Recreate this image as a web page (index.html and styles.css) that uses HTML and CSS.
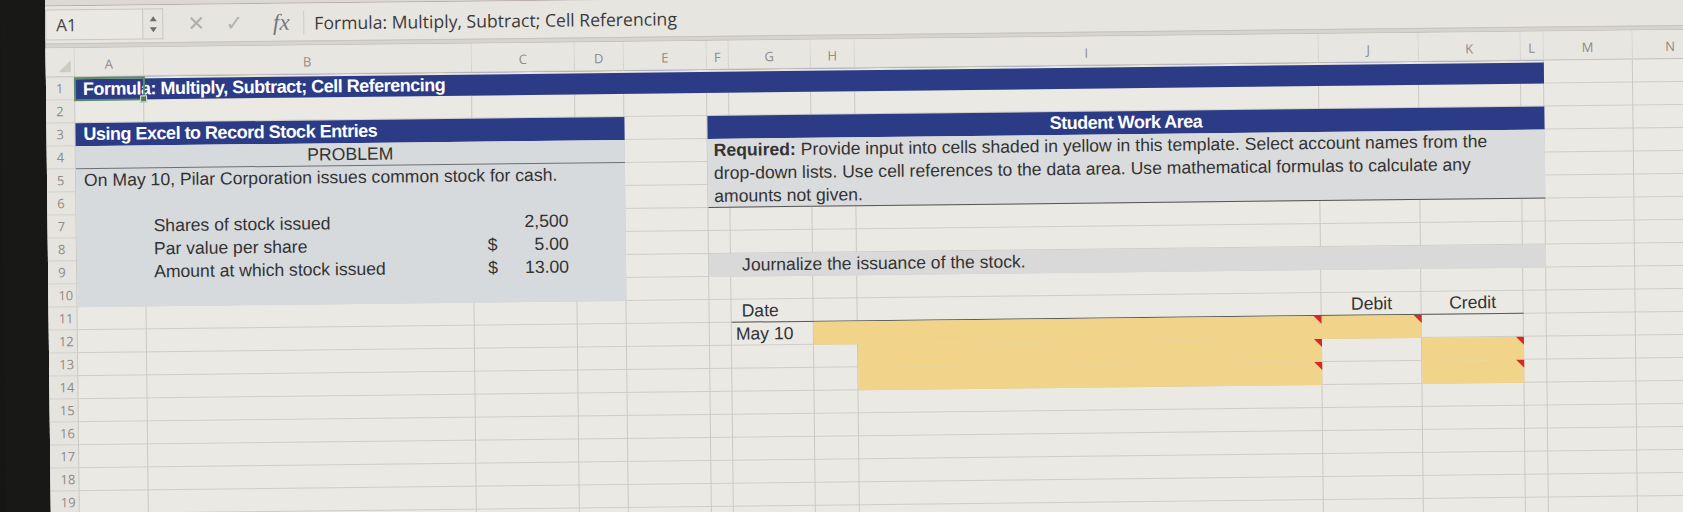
FILE: index.html
```html
<!DOCTYPE html>
<html lang="en">
<head>
    <meta charset="UTF-8">
    <meta name="viewport" content="width=device-width, initial-scale=1.0">
    <title>Formula: Multiply, Subtract; Cell Referencing</title>
    <link rel="stylesheet" href="styles.css">
</head>
<body>

    <div class="screen">
        <div class="bezel"></div>

        <div class="app">
            <div class="topline"></div>

            <div class="formula-bar">
                <div class="name-box">A1</div>
                <div class="spinner">
                    <svg width="8" height="18" viewBox="0 0 8 18">
                        <path d="M4 1 L7.5 6 L0.5 6 Z" fill="#6d6d6d"/>
                        <path d="M0.5 12 L7.5 12 L4 17 Z" fill="#6d6d6d"/>
                    </svg>
                </div>
                <span class="fx-btn cancel">✕</span>
                <span class="fx-btn enter">✓</span>
                <span class="fx">fx</span>
                <span class="bar-sep"></span>
                <div class="formula-text">Formula: Multiply, Subtract; Cell Referencing</div>
            </div>

            <div class="divider"></div>

            <div class="sheet">
                <!-- column lines, with their header letters -->
                <div class="col rownums">
                    <div class="col-head corner"><span class="corner-tri"></span></div>
                    <div class="rn">1</div><div class="rn">2</div><div class="rn">3</div><div class="rn">4</div>
                    <div class="rn">5</div><div class="rn">6</div><div class="rn">7</div><div class="rn">8</div>
                    <div class="rn">9</div><div class="rn">10</div><div class="rn">11</div><div class="rn">12</div>
                    <div class="rn">13</div><div class="rn">14</div><div class="rn">15</div><div class="rn">16</div>
                    <div class="rn">17</div><div class="rn">18</div><div class="rn">19</div><div class="rn">20</div>
                    <div class="rn">21</div><div class="rn">22</div>
                </div>
                <div class="col"><div class="col-head">A</div></div>
                <div class="col"><div class="col-head">B</div></div>
                <div class="col"><div class="col-head">C</div></div>
                <div class="col"><div class="col-head">D</div></div>
                <div class="col"><div class="col-head">E</div></div>
                <div class="col"><div class="col-head">F</div></div>
                <div class="col"><div class="col-head">G</div></div>
                <div class="col"><div class="col-head">H</div></div>
                <div class="col"><div class="col-head">I</div></div>
                <div class="col"><div class="col-head">J</div></div>
                <div class="col"><div class="col-head">K</div></div>
                <div class="col"><div class="col-head">L</div></div>
                <div class="col"><div class="col-head">M</div></div>
                <div class="col"><div class="col-head">N</div></div>

                <!-- row 1 -->
                <div class="title">Formula: Multiply, Subtract; Cell Referencing</div>
                <div class="selected"></div>

                <!-- problem block -->
                <div class="band band-left">Using Excel to Record Stock Entries</div>
                <div class="problem-bg"></div>
                <div class="problem-head">PROBLEM</div>
                <div class="problem-text">On May 10, Pilar Corporation issues common stock for cash.</div>
                <div class="data-row r7">
                    <span class="label">Shares of stock issued</span>
                    <span class="amount"><span></span><span>2,500</span></span>
                </div>
                <div class="data-row r8">
                    <span class="label">Par value per share</span>
                    <span class="amount"><span>$</span><span>5.00</span></span>
                </div>
                <div class="data-row r9">
                    <span class="label">Amount at which stock issued</span>
                    <span class="amount"><span>$</span><span>13.00</span></span>
                </div>

                <!-- student work area -->
                <div class="band band-right">Student Work Area</div>
                <div class="required"><strong>Required:</strong> Provide input into cells shaded in yellow in this template. Select account names from the<br>drop-down lists. Use cell references to the data area. Use mathematical formulas to calculate any<br>amounts not given.</div>
                <div class="journal">Journalize the issuance of the stock.</div>

                <div class="entry-head">
                    <span>Date</span>
                    <span></span>
                    <span class="num-head">Debit</span>
                    <span class="num-head">Credit</span>
                </div>
                <div class="may">May 10</div>

                <div class="input acct-12"></div>
                <div class="input debit-12"></div>
                <div class="input acct-13"></div>
                <div class="input credit-13"></div>
                <div class="input acct-14"></div>
                <div class="input credit-14"></div>
            </div>
        </div>
    </div>

</body>
</html>
```

FILE: styles.css
```css
body {
    margin: 0;
    background: #161615;
    overflow: hidden;
    font-family: 'Liberation Sans', Arial, sans-serif;
    color: #333;
}

/* the photo is taken slightly tilted */
.screen {
    display: flex;
    width: 1860px;
    height: 600px;
    transform: rotate(-0.65deg);
    transform-origin: 0 0;
}

.bezel {
    width: 45px;
    flex: none;
    background: #181817;
}

.app {
    flex: 1;
    display: flex;
    flex-direction: column;
    background: #e9e7e2;
}

.topline {
    height: 6px;
    background: #dcd9d3;
    border-bottom: 1px solid #b8aeab;
}

/* formula bar */
.formula-bar {
    height: 37px;
    display: flex;
    align-items: center;
    font-family: 'Open Sans', 'Noto Sans', sans-serif;
    background: #e7e5e0;
}

.name-box {
    width: 98px;
    height: 31px;
    box-sizing: border-box;
    border: 1px solid #c9c6c0;
    padding-left: 10px;
    display: flex;
    align-items: center;
    font-size: 17px;
    color: #444;
    background: #eae8e3;
}

.spinner {
    width: 20px;
    height: 31px;
    box-sizing: border-box;
    border: 1px solid #c9c6c0;
    border-left: none;
    display: flex;
    align-items: center;
    justify-content: center;
}

.fx-btn {
    width: 22px;
    text-align: center;
    font-family: 'DejaVu Sans', sans-serif;
    font-size: 21px;
    color: #b3b1ac;
}

.cancel {
    margin-left: 22px;
}

.enter {
    margin-left: 16px;
}

.fx {
    width: 24px;
    margin-left: 24px;
    text-align: center;
    font-family: 'Liberation Serif', serif;
    font-style: italic;
    font-size: 23px;
    color: #777;
}

.bar-sep {
    width: 1px;
    height: 24px;
    margin-left: 10px;
    background: #cfccc6;
}

.formula-text {
    margin-left: 10px;
    font-size: 17.6px;
    color: #3a3a3a;
}

.divider {
    height: 3px;
    background: #d7d4ce;
    border-top: 1px solid #c6c3bd;
    border-bottom: 1px solid #c6c3bd;
}

/* sheet grid */
.sheet {
    display: grid;
    grid-template-columns: 29px 69px 328px 103px 49px 83px 22px 82px 44px 464px 100px 102px 23px 89px 76px 120px;
    grid-template-rows: 29px repeat(22, 23px);
    background: repeating-linear-gradient(to bottom, #ebe9e4 0, #ebe9e4 22px, #cfcdc8 22px, #cfcdc8 23px);
    background-position: 0 29px;
    font-size: 17.6px;
}

.col {
    grid-row: 1 / -1;
    border-right: 1px solid #cbc9c4;
}

.col:nth-child(1) { grid-column: 1; }
.col:nth-child(2) { grid-column: 2; }
.col:nth-child(3) { grid-column: 3; }
.col:nth-child(4) { grid-column: 4; }
.col:nth-child(5) { grid-column: 5; }
.col:nth-child(6) { grid-column: 6; }
.col:nth-child(7) { grid-column: 7; }
.col:nth-child(8) { grid-column: 8; }
.col:nth-child(9) { grid-column: 9; }
.col:nth-child(10) { grid-column: 10; }
.col:nth-child(11) { grid-column: 11; }
.col:nth-child(12) { grid-column: 12; }
.col:nth-child(13) { grid-column: 13; }
.col:nth-child(14) { grid-column: 14; }
.col:nth-child(15) { grid-column: 15; }

.col-head {
    height: 29px;
    box-sizing: border-box;
    border-bottom: 1px solid #c4c2bc;
    background: #e8e6e1;
    display: flex;
    align-items: center;
    justify-content: center;
    padding-top: 3px;
    font-family: 'Open Sans', 'Noto Sans', sans-serif;
    font-size: 13px;
    color: #8d8b87;
}

.corner {
    justify-content: flex-end;
    align-items: flex-end;
    padding: 0 3px 4px 0;
}

.corner-tri {
    width: 0;
    height: 0;
    border-left: 12px solid transparent;
    border-bottom: 12px solid #cdcac4;
}

.rownums {
    background: #e6e4df;
}

.rn {
    height: 23px;
    box-sizing: border-box;
    border-bottom: 1px solid #d3d1cc;
    padding-left: 10px;
    display: flex;
    align-items: center;
    font-family: 'Open Sans', 'Noto Sans', sans-serif;
    font-size: 13px;
    color: #8d8b87;
}

/* header bands */
.title, .band {
    background: #2c3b86;
    color: #fff;
    font-weight: bold;
    font-size: 18px;
    letter-spacing: -0.5px;
    display: flex;
    align-items: center;
    white-space: nowrap;
}

.title {
    grid-row: 2;
    grid-column: 2 / 14;
    padding-left: 8px;
    border-top: 2px solid #e9e7e2;
}

.selected {
    grid-row: 2;
    grid-column: 2;
    border: 2px solid #5d8c66;
    margin: 0 -1px -1px -1px;
    position: relative;
}

.selected::after {
    content: "";
    position: absolute;
    right: -4px;
    bottom: -4px;
    width: 5px;
    height: 5px;
    background: #4f7d58;
    border: 1px solid #e9e7e2;
}

.band-left {
    grid-row: 4;
    grid-column: 2 / 6;
    padding-left: 8px;
}

.band-right {
    grid-row: 4;
    grid-column: 7 / 14;
    justify-content: center;
}

/* problem block */
.problem-bg {
    grid-row: 5 / 12;
    grid-column: 2 / 6;
    background: #d7dadd;
}

.problem-head {
    grid-row: 5;
    grid-column: 2 / 6;
    text-align: center;
    line-height: 22px;
    border-bottom: 1px solid #6f6f6f;
}

.problem-text {
    grid-row: 6;
    grid-column: 2 / 6;
    padding-left: 8px;
    line-height: 23px;
    white-space: nowrap;
}

.data-row {
    grid-column: 3 / 5;
    display: grid;
    grid-template-columns: 328px 103px;
    line-height: 23px;
}

.r7 { grid-row: 8; }
.r8 { grid-row: 9; }
.r9 { grid-row: 10; }

.label {
    padding-left: 8px;
}

.amount {
    display: flex;
    justify-content: space-between;
    padding: 0 8px 0 14px;
}

/* student work area */
.required {
    grid-row: 5 / 8;
    grid-column: 7 / 14;
    background: #dadbdc;
    border-bottom: 1px solid #555;
    padding: 0 0 0 6px;
    line-height: 23px;
    white-space: nowrap;
    overflow: hidden;
}

.journal {
    grid-row: 10;
    grid-column: 7 / 14;
    background: #d9d9d9;
    padding-left: 33px;
    line-height: 23px;
}

.entry-head {
    grid-row: 12;
    grid-column: 8 / 13;
    display: grid;
    grid-template-columns: 82px 508px 100px 102px;
    border-bottom: 1px solid #5a5a5a;
    line-height: 22px;
}

.entry-head span:first-child {
    padding-left: 10px;
}

.num-head {
    text-align: center;
}

.may {
    grid-row: 13;
    grid-column: 8;
    padding-left: 4px;
    line-height: 23px;
}

/* yellow input cells with their red corner marks */
.input {
    background: #f1d389;
    position: relative;
}

.input::after {
    content: "";
    position: absolute;
    top: 0;
    right: 0;
    border-top: 8px solid #d8262a;
    border-left: 8px solid transparent;
}

.acct-12 { grid-row: 13; grid-column: 9 / 11; }
.debit-12 { grid-row: 13; grid-column: 11; }
.acct-13 { grid-row: 14; grid-column: 10; }
.credit-13 { grid-row: 14; grid-column: 12; }
.acct-14 { grid-row: 15; grid-column: 10; }
.credit-14 { grid-row: 15; grid-column: 12; }
```
